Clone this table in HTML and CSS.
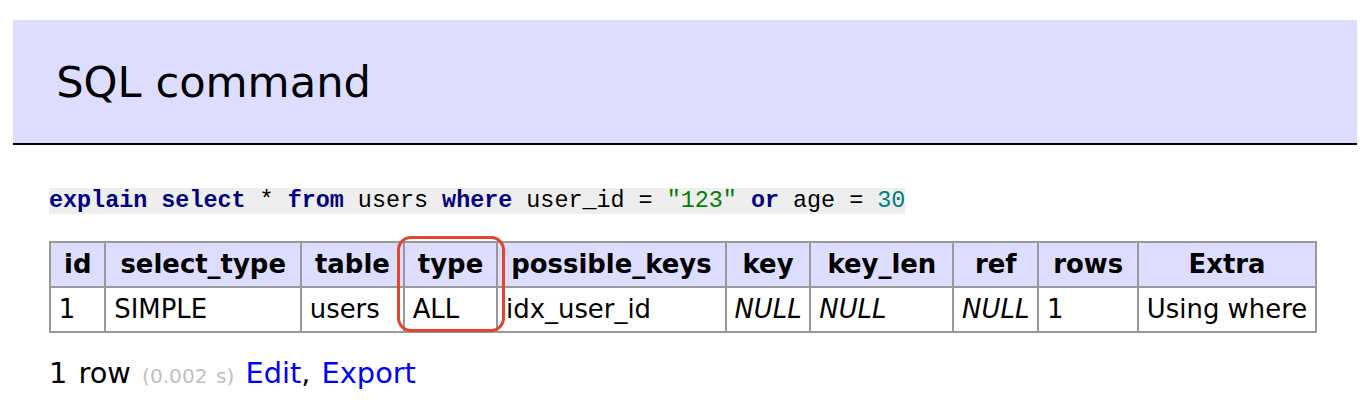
FILE: index.html
```html
<!DOCTYPE html>
<html>
<head>
<meta charset="utf-8">
<link rel="stylesheet" href="styles.css">
</head>
<body>
<div class="content">
  <h2 class="title">SQL command</h2>
  <div class="sql"><code><span class="kw">explain</span> <span class="kw">select</span> * <span class="kw">from</span> users <span class="kw">where</span> user_id = <span class="str">"123"</span> <span class="kw">or</span> age = <span class="num">30</span></code></div>
  <table class="result">
    <thead>
      <tr>
        <th>id</th>
        <th class="mid">select_type</th>
        <th>table</th>
        <th class="marked">type<span class="highlight"></span></th>
        <th>possible_keys</th>
        <th class="mid">key</th>
        <th class="wide">key_len</th>
        <th>ref</th>
        <th class="mid">rows</th>
        <th class="mid">Extra</th>
      </tr>
    </thead>
    <tbody>
      <tr>
        <td>1</td>
        <td>SIMPLE</td>
        <td>users</td>
        <td>ALL</td>
        <td>idx_user_id</td>
        <td class="null">NULL</td>
        <td class="null">NULL</td>
        <td class="null">NULL</td>
        <td>1</td>
        <td>Using where</td>
      </tr>
    </tbody>
  </table>
  <p class="summary">1 row <span class="time">(0.002 s)</span> <a href="#" class="link">Edit</a>, <a href="#" class="link">Export</a></p>
</div>
</body>
</html>
```
FILE: styles.css
```css
body {
  margin: 0;
  font: 28.8px/1.25 "DejaVu Sans", Verdana, sans-serif;
  color: #000;
  background: #fff;
}

.content {
  padding: 20px 15px 0 49px;
}

.title {
  margin: 0 0 40px -36px;
  padding: 34.6px 43.2px;
  font-size: 43.2px;
  line-height: 1.25;
  font-weight: normal;
  background: #ddf;
  border-bottom: 2px solid #000;
}

.sql {
  margin: 0 0 24px;
  font: 23.4px/32px "Courier New", "Nimbus Mono PS", "FreeMono", "Liberation Mono", monospace;
}

.sql code {
  font: inherit;
  background: #eee;
}

.kw {
  color: #000080;
  font-weight: bold;
}

.str {
  color: #007f00;
}

.num {
  color: #007f7f;
}

.result {
  border-collapse: collapse;
  font-size: 25.92px;
  line-height: 1.25;
}

.result th,
.result td {
  border: 2px solid #999;
  padding: 5.2px 7.8px;
  white-space: nowrap;
}

.result th {
  background: #ddf;
  font-weight: bold;
  text-align: center;
  padding: 5.2px 13px;
}

.result th.mid {
  padding: 5.2px 14px;
}

.result th.wide {
  padding: 5.2px 16px;
}

.result td {
  text-align: left;
}

.null {
  font-style: italic;
}

.marked {
  position: relative;
}

.highlight {
  position: absolute;
  left: -8px;
  right: -9px;
  top: -7px;
  height: 96px;
  border: 3px solid #e4432e;
  border-radius: 14px;
  box-sizing: border-box;
}

.summary {
  margin: 23px 0 0;
  word-spacing: 2px;
}

.time {
  color: silver;
  font-size: 70%;
}

.link {
  color: #00f;
  text-decoration: none;
}
```
